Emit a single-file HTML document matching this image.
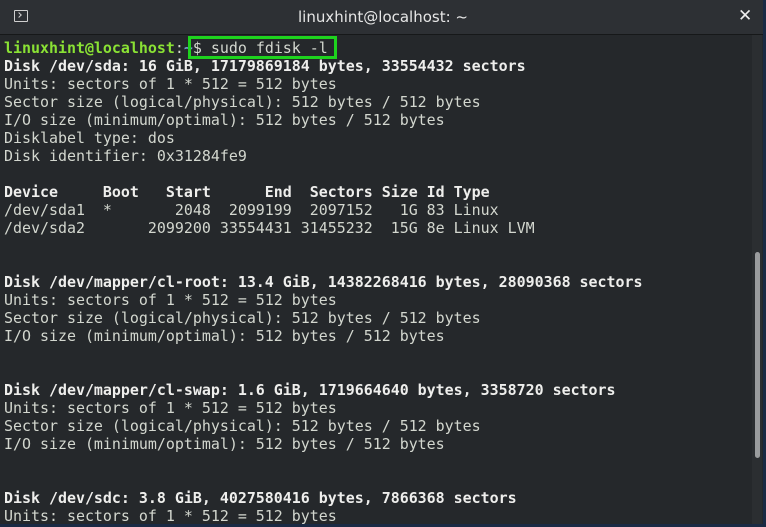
<!DOCTYPE html>
<html><head><meta charset="utf-8"><style>
html,body{margin:0;padding:0;width:766px;height:527px;overflow:hidden;background:#25282b}
.title{position:absolute;left:0;top:0;width:766px;height:34px;background:#2d3034;border-bottom:1px solid #161819;}
.title .t{position:absolute;left:0;width:766px;top:8px;text-align:center;color:#e6e6e6;font:15px "DejaVu Sans","Liberation Sans",sans-serif}
.icon{position:absolute;left:14px;top:10px;width:12px;height:10px;border:1px solid #cfcfcf;border-radius:1px}
.icon:after{content:"";position:absolute;left:2px;top:2px;width:3px;height:3px;border-right:1px solid #cfcfcf;border-bottom:1px solid #cfcfcf;transform:rotate(-45deg)}
.x{position:absolute;left:738px;top:6px;color:#eee;font:bold 17px "DejaVu Sans",sans-serif}
pre{position:absolute;left:4px;top:39px;margin:0;font:14.95px/18px "DejaVu Sans Mono","Liberation Mono",monospace;color:#d3d7cf;white-space:pre}
b{color:#eeeeec}
.g{color:#8ae234;font-weight:bold}
.bl{color:#729fcf;font-weight:bold}
.box{position:absolute;left:188px;top:36px;width:143px;height:17px;border:3px solid #1ed31e}
.track{position:absolute;left:752px;top:35px;width:10px;height:489px;background:#2b2e31}
.thumb{position:absolute;left:755px;top:252px;width:5px;height:206px;background:#9a9c9e;border-radius:3px}
.edge{position:absolute;left:763px;top:0;width:3px;height:527px;background:#1a2a44}
.bot{position:absolute;left:0;top:524px;width:766px;height:3px;background:#1a2a44}
</style></head><body>
<div class="title"><div class="icon"></div><div class="t">linuxhint@localhost: ~</div><div class="x">✕</div></div>
<div class="track"></div><div class="thumb"></div>
<pre><span class="g">linuxhint@localhost</span>:<span class="bl">~</span>$ sudo fdisk -l
<b>Disk /dev/sda: 16 GiB, 17179869184 bytes, 33554432 sectors</b>
Units: sectors of 1 * 512 = 512 bytes
Sector size (logical/physical): 512 bytes / 512 bytes
I/O size (minimum/optimal): 512 bytes / 512 bytes
Disklabel type: dos
Disk identifier: 0x31284fe9

<b>Device     Boot   Start      End  Sectors Size Id Type</b>
/dev/sda1  *       2048  2099199  2097152   1G 83 Linux
/dev/sda2       2099200 33554431 31455232  15G 8e Linux LVM


<b>Disk /dev/mapper/cl-root: 13.4 GiB, 14382268416 bytes, 28090368 sectors</b>
Units: sectors of 1 * 512 = 512 bytes
Sector size (logical/physical): 512 bytes / 512 bytes
I/O size (minimum/optimal): 512 bytes / 512 bytes


<b>Disk /dev/mapper/cl-swap: 1.6 GiB, 1719664640 bytes, 3358720 sectors</b>
Units: sectors of 1 * 512 = 512 bytes
Sector size (logical/physical): 512 bytes / 512 bytes
I/O size (minimum/optimal): 512 bytes / 512 bytes


<b>Disk /dev/sdc: 3.8 GiB, 4027580416 bytes, 7866368 sectors</b>
Units: sectors of 1 * 512 = 512 bytes</pre>
<div class="box"></div>
<div class="edge"></div><div class="bot"></div>
</body></html>
